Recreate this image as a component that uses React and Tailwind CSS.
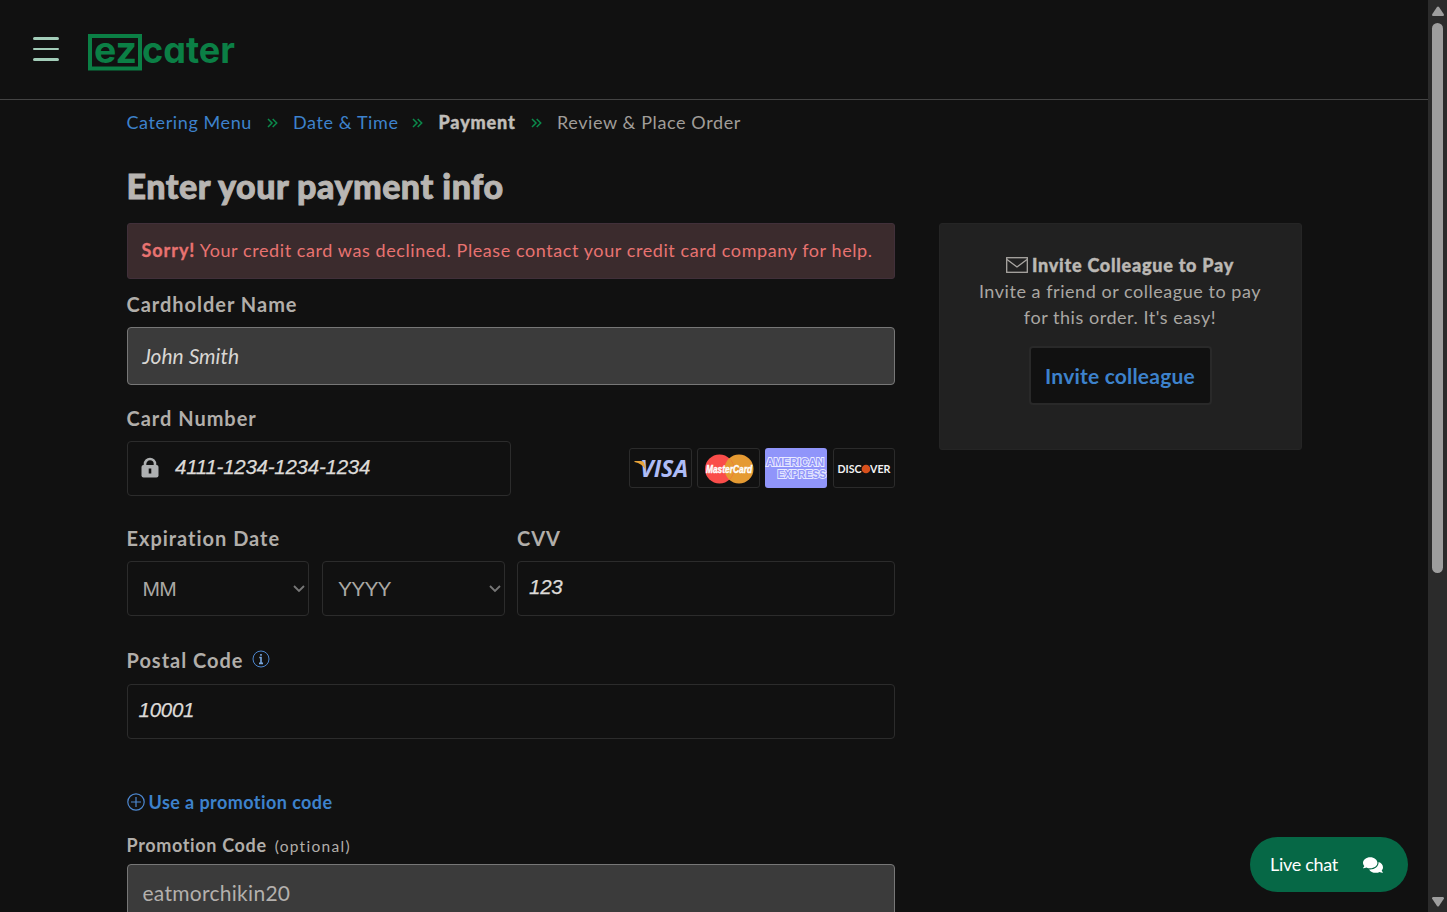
import { FaComments } from "react-icons/fa";

function Logo() {
  return (
    <svg width="148" height="40" viewBox="0 0 148 40" className="overflow-visible font-[Inter] font-bold" fill="#0b7f45" style={{ fontFeatureSettings: '"cv11"' }}>
      <rect x="2" y="4" width="50" height="32.500" fill="none" stroke="#0b7f45" strokeWidth="4" />
      <text x="6" y="30.500" fontSize="37" textLength="43" lengthAdjust="spacingAndGlyphs">ez</text>
      <text x="54" y="30.500" fontSize="37" textLength="93" lengthAdjust="spacingAndGlyphs">cater</text>
    </svg>
  );
}

function Header() {
  return (
    <header className="flex h-[100px] shrink-0 items-center border-b border-[#444444] pl-[33px]">
      <button className="mb-[1px] flex w-[26px] flex-col gap-2">
        <span className="h-[2.5px] w-full rounded bg-[#a3cdb9]" />
        <span className="h-[2.5px] w-full rounded bg-[#a3cdb9]" />
        <span className="h-[2.5px] w-full rounded bg-[#a3cdb9]" />
      </button>
      <div className="mt-[5px] ml-[29px]">
        <Logo />
      </div>
    </header>
  );
}

function Arrows() {
  return (
    <svg width="11" height="10" viewBox="0 0 11 10" fill="none" stroke="#0b8a4b" strokeWidth="1.5" className="mt-[2px]">
      <path d="M1 1l4 4-4 4M5.7 1l4 4-4 4" />
    </svg>
  );
}

function Breadcrumbs() {
  return (
    <nav className="flex h-[44px] items-center text-[18px] tracking-[0.6px] whitespace-nowrap">
      <a className="w-[140px] text-[#3d82cc]">Catering Menu</a>
      <Arrows />
      <a className="ml-[15.500px] w-[119px] text-[#3d82cc]">Date &amp; Time</a>
      <Arrows />
      <span className="ml-[15.500px] w-[92px] font-black tracking-[0.85px] text-[#c0bdb9] [-webkit-text-stroke:0.4px_#c0bdb9]">Payment</span>
      <Arrows />
      <span className="ml-[15.500px] text-[#a09d99]">Review &amp; Place Order</span>
    </nav>
  );
}

function Label({ children }) {
  return <label className="flex items-center text-[20px] leading-[26px] font-bold tracking-[0.98px] text-[#b1aeaa]">{children}</label>;
}

function Select({ children }) {
  return (
    <div className="flex h-[55px] w-[182.500px] items-center justify-between rounded border border-[#2c2c2c] pr-[3px] pl-[15px] font-['Liberation_Sans',sans-serif] text-[21px] tracking-[-0.8px] text-[#aaa8a4]">
      <span>{children}</span>
      <svg width="12" height="8" viewBox="0 0 12 8" fill="none" stroke="#777" strokeWidth="1.800">
        <path d="M1 1l5 5 5-5" />
      </svg>
    </div>
  );
}

function Lock() {
  return (
    <svg width="18" height="21" viewBox="0 0 18 21" className="mb-[2px]">
      <path d="M4 9V7a5 5 0 0 1 10 0v2" fill="none" stroke="#aeb0b1" strokeWidth="2.6" />
      <rect x="0.5" y="8" width="17" height="12.5" rx="2" fill="#aeb0b1" />
      <path d="M9 11.5v5" stroke="#111" strokeWidth="2.6" />
    </svg>
  );
}

function Cards() {
  return (
    <div className="mb-[2px] flex gap-[5px]">
      <div className="h-10 w-[63px] rounded-[3px] border border-[#2b2b2b]">
        <svg width="61" height="38" viewBox="0 0 61 38">
          <text x="10" y="28" fontFamily="Open Sans" fontSize="22.500" fontWeight="700" fontStyle="italic" textLength="48" lengthAdjust="spacingAndGlyphs" fill="#aebcf6">VISA</text>
          <path d="M4.5 12h6.500c2 0 3 1 3.400 3l1.300 6C13.500 16.500 9.500 14 4.500 13z" fill="#e8a43a" />
        </svg>
      </div>
      <div className="h-10 w-[63px] rounded-[3px] border border-[#2b2b2b]">
        <svg width="61" height="38" viewBox="0 0 61 38" className="overflow-visible">
          <circle cx="41" cy="20" r="14.500" fill="#e59a32" />
          <circle cx="21.500" cy="20" r="14.500" fill="#fa4d4a" />
          <path d="M31.200 9.300a14.500 14.500 0 0 1 0 21.400a14.500 14.500 0 0 1 0-21.400" fill="#e59a32" />
          <text x="8" y="24" fontFamily="Liberation Sans" fontSize="10" fontWeight="700" fontStyle="italic" textLength="46" lengthAdjust="spacingAndGlyphs" fill="#fff" stroke="#fff" strokeWidth="0.4">MasterCard</text>
        </svg>
      </div>
      <div className="h-10 w-[62px] rounded-[3px] bg-[#9095fa]">
        <svg width="62" height="40" viewBox="0 0 62 40" fontFamily="Liberation Sans" fontWeight="700" fill="#9095fa" stroke="#e9eaff" strokeWidth="1.800" paintOrder="stroke">
          <text x="1" y="17.500" fontSize="10.500" textLength="58" lengthAdjust="spacingAndGlyphs">AMERICAN</text>
          <text x="12.500" y="30" fontSize="10.500" textLength="48.500" lengthAdjust="spacingAndGlyphs">EXPRESS</text>
        </svg>
      </div>
      <div className="ml-[1px] h-10 w-[62px] rounded-[3px] border border-[#2b2b2b]">
        <svg width="60" height="38" viewBox="0 0 60 38" fontFamily="Lato" fontWeight="700" fontSize="12" fill="#f2f2f2">
          <text x="3.500" y="24.300" textLength="24" lengthAdjust="spacingAndGlyphs">DISC</text>
          <circle cx="32" cy="20" r="4.300" fill="#d8501c" />
          <text x="36" y="24.300" textLength="20.500" lengthAdjust="spacingAndGlyphs">VER</text>
        </svg>
      </div>
    </div>
  );
}

function PaymentForm() {
  return (
    <form className="flex w-[768px] flex-col">
      <div className="flex h-14 items-center rounded-[3px] border border-[#41303a] bg-[#3b2b2d] pb-[2px] pl-[14px] text-[18px] tracking-[0.58px] whitespace-nowrap text-[#e87371]">
        <span>
          <b className="tracking-[0.95px] [-webkit-text-stroke:0.3px_#e87371]">Sorry!</b> Your credit card was declined. Please contact your credit card company for help.
        </span>
      </div>

      <div className="mt-[12px]">
        <Label>Cardholder Name</Label>
      </div>
      <div className="mt-[10px] flex h-[58px] items-center rounded border border-[#777777] bg-[#3b3b3b] pl-[15px] text-[21px] text-[#d8d6d3] italic">John Smith</div>

      <div className="mt-[20px]">
        <Label>Card Number</Label>
      </div>
      <div className="mt-[10px] flex items-center justify-between">
        <div className="flex h-[55px] w-[384px] items-center gap-4 rounded border border-[#2c2c2c] pl-[13.500px] text-[#dddbd8]">
          <Lock />
          <span className="pb-[2px] font-['Liberation_Sans',sans-serif] text-[20.500px] tracking-[-0.25px] italic [-webkit-text-stroke:0.25px_#dddbd8]">4111-1234-1234-1234</span>
        </div>
        <Cards />
      </div>

      <div className="mt-[29px] flex">
        <div className="w-[390.500px]">
          <Label>Expiration Date</Label>
        </div>
        <Label>CVV</Label>
      </div>
      <div className="mt-[10px] flex">
        <div className="flex w-[390.500px] gap-[13px]">
          <Select>MM</Select>
          <Select>YYYY</Select>
        </div>
        <div className="flex h-[55px] flex-1 items-center rounded border border-[#2c2c2c] pb-[2px] pl-[11px] font-['Liberation_Sans',sans-serif] text-[20.500px] tracking-[-0.25px] text-[#dddbd8] italic [-webkit-text-stroke:0.25px_#dddbd8]">123</div>
      </div>

      <div className="mt-[31px]">
        <Label>
          Postal Code
          <svg width="18" height="18" viewBox="0 0 18 18" className="mb-[3px] ml-[9px]" fill="none" stroke="#4d87cf">
            <circle cx="9" cy="9" r="8" />
            <path d="M7.300 7.500H9v6M7 13.400h4M9 4v1.800" strokeWidth="1.600" stroke="#7aa9df" />
          </svg>
        </Label>
      </div>
      <div className="mt-[11px] flex h-[55px] items-center rounded border border-[#2c2c2c] pb-[2px] pl-[11px] font-['Liberation_Sans',sans-serif] text-[20.500px] tracking-[-0.25px] text-[#dddbd8] italic [-webkit-text-stroke:0.25px_#dddbd8]">10001</div>

      <a className="mt-[50px] flex h-[26px] items-center gap-1 text-[18px] font-bold tracking-[0.43px] text-[#3d82cc]">
        <svg width="18" height="18" viewBox="0 0 18 18" fill="none" stroke="#4d87cf" strokeWidth="1.200">
          <circle cx="9" cy="9" r="8.200" />
          <path d="M9 4v10M4 9h10" />
        </svg>
        Use a promotion code
      </a>
      <label className="mt-[17px] flex h-[26px] items-baseline gap-2 text-[18px] font-bold tracking-[0.65px] text-[#b1aeaa]">
        Promotion Code <span className="text-[15.500px] font-normal tracking-[1.3px]">(optional)</span>
      </label>
      <div className="mt-[6px] flex h-[58px] items-center rounded border border-[#777777] bg-[#3b3b3b] pl-[15px] text-[21px] tracking-[0.28px] text-[#b3b0ad]">eatmorchikin20</div>
    </form>
  );
}

function InviteCard() {
  return (
    <aside className="flex h-[227px] w-[363px] flex-col items-center rounded-[3px] border border-[#252525] bg-[#212121] pt-[28px] text-[18px] leading-[26px] tracking-[0.54px] text-[#aaa7a3]">
      <div className="flex items-center gap-1 font-black tracking-[0.75px] text-[#bbb8b4] [-webkit-text-stroke:0.4px_#bbb8b4]">
        <svg width="22" height="16" viewBox="0 0 22 16" fill="none" stroke="#aaa7a3" strokeWidth="1.300">
          <rect x="0.700" y="0.700" width="20.600" height="14.600" />
          <path d="M1 2.500l10 7.500 10-7.500" />
        </svg>
        Invite Colleague to Pay
      </div>
      <p className="text-center whitespace-nowrap">
        Invite a friend or colleague to pay
        <br />
        for this order. It's easy!
      </p>
      <button className="mt-[16px] h-[59px] w-[183px] rounded border-2 border-[#292929] bg-[#111111] text-[21px] font-bold tracking-[0.2px] whitespace-nowrap text-[#3d82cc]">Invite colleague</button>
    </aside>
  );
}

function Scrollbar() {
  return (
    <div className="flex w-[19px] shrink-0 flex-col items-center bg-[#2b2b2b]">
      <svg width="12" height="10" viewBox="0 0 12 10" className="mt-[6px]" fill="#9e9e9e">
        <path d="M5 1Q6 0 7 1L12 8.500Q12 10 11 10H1Q0 10 0 8.500z" />
      </svg>
      <div className="mt-[7px] h-[550px] w-[11px] rounded-full bg-[#9e9e9e]" />
      <svg width="12" height="10" viewBox="0 0 12 10" className="mt-auto mb-[5px]" fill="#9e9e9e">
        <path d="M5 9Q6 10 7 9L12 1.500Q12 0 11 0H1Q0 0 0 1.500z" />
      </svg>
    </div>
  );
}

export default function App() {
  return (
    <div className="flex h-[912px] w-[1447px] overflow-hidden bg-[#111111] font-[Lato,sans-serif]">
      <div className="flex min-w-0 flex-1 flex-col">
        <Header />
        <main className="pl-[126.500px]">
          <Breadcrumbs />
          <h1 className="mt-[21px] h-[58px] text-[34px] leading-[42px] font-black tracking-[0.5px] text-[#b8b5b2] [-webkit-text-stroke:0.9px_#b8b5b2]">Enter your payment info</h1>
          <div className="flex items-start gap-[44px]">
            <PaymentForm />
            <InviteCard />
          </div>
        </main>
      </div>
      <Scrollbar />
      <button className="fixed right-[39px] bottom-5 flex h-[55px] w-[158px] items-center justify-between rounded-full bg-[#066846] pr-[25px] pl-[20px] text-[18px] tracking-[-0.3px] text-white">
        Live chat
        <FaComments size={20} />
      </button>
    </div>
  );
}
